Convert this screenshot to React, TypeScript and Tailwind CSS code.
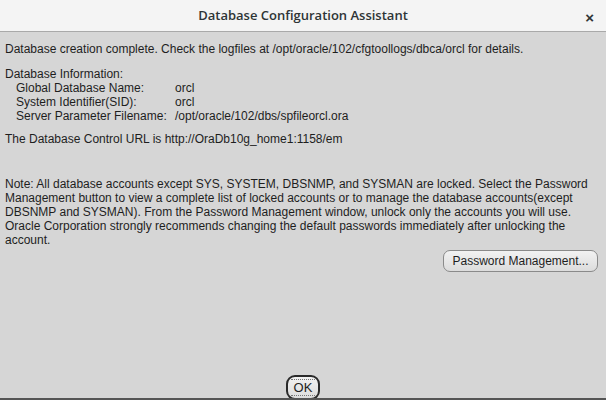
export default function App() {
  return (
    <div className="flex h-[400px] w-[606px] flex-col overflow-hidden bg-[#d6d6d6] font-['Liberation_Sans',sans-serif] text-[12px] text-[#1e1e1e]">
      <div className="relative flex h-[32px] shrink-0 items-center justify-center border-b border-[#a9a9a9] bg-[#f4f4f4]">
        <span className="font-['Open_Sans',sans-serif] text-[13px] font-semibold text-[#2e3436]">
          Database Configuration Assistant
        </span>
        <span className="absolute right-[12px] top-[7px] text-[15px] font-bold text-[#2e3436]">×</span>
      </div>

      <div className="flex flex-1 flex-col px-[5px] pt-[10px]">
        <p className="leading-[14px]">
          Database creation complete. Check the logfiles at /opt/oracle/102/cfgtoollogs/dbca/orcl for details.
        </p>

        <div className="mt-[11px] leading-[14px]">
          <p>Database Information:</p>
          <div className="grid grid-cols-[159px_1fr] pl-[11px]">
            <span>Global Database Name:</span>
            <span>orcl</span>
            <span>System Identifier(SID):</span>
            <span>orcl</span>
            <span>Server Parameter Filename:</span>
            <span>/opt/oracle/102/dbs/spfileorcl.ora</span>
          </div>
        </div>

        <p className="mt-[9px] leading-[14px]">The Database Control URL is http://OraDb10g_home1:1158/em</p>

        <p className="mt-[31px] whitespace-nowrap leading-[14px]">
          Note: All database accounts except SYS, SYSTEM, DBSNMP, and SYSMAN are locked. Select the Password
          <br />
          Management button to view a complete list of locked accounts or to manage the database accounts(except
          <br />
          DBSNMP and SYSMAN). From the Password Management window, unlock only the accounts you will use.
          <br />
          Oracle Corporation strongly recommends changing the default passwords immediately after unlocking the
          <br />
          account.
        </p>

        <div className="mt-[3px] flex justify-end pr-[3px]">
          <button className="h-[22px] w-[155px] rounded-[7px] border border-[#8a8a8a] bg-gradient-to-b from-[#f2f2f2] to-[#dcdcdc] text-[12px]">
            Password Management...
          </button>
        </div>

        <div className="mt-auto flex h-[23px] justify-center overflow-hidden">
          <button className="h-[25px] w-[34px] shrink-0 rounded-[9px] border-2 border-[#2a2a2a] bg-gradient-to-b from-[#f2f2f2] to-[#dcdcdc] text-[13px]">
            <span className="border-y border-dotted border-[#777] px-[3px]">OK</span>
          </button>
        </div>
      </div>
      <div className="h-[2px] shrink-0 bg-[#555]" />
    </div>
  );
}
